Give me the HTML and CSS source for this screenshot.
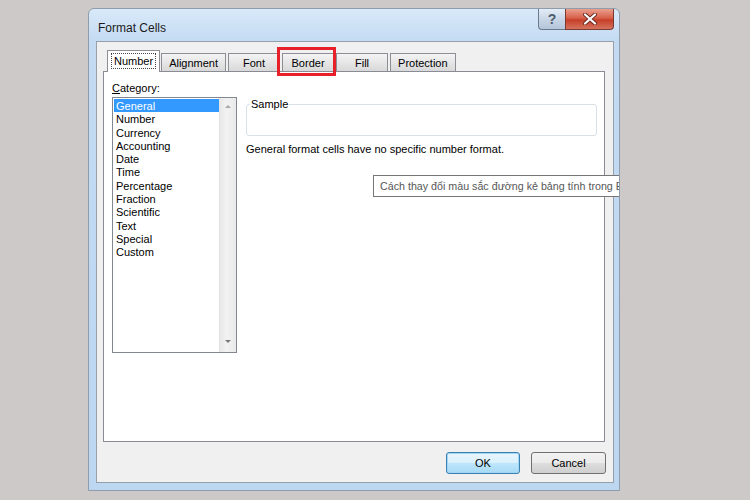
FILE: index.html
```html
<!DOCTYPE html>
<html>
<head>
<meta charset="utf-8">
<link rel="stylesheet" href="styles.css">
</head>
<body>
<div class="window">
  <div class="titlebar">
    <span class="title">Format Cells</span>
    <div class="caption">
      <span class="cap-help">?</span>
      <span class="cap-close">
        <svg width="20" height="12" viewBox="0 0 20 12">
          <path d="M5 1.5 L15 10.5 M15 1.5 L5 10.5" stroke="#6b2a22" stroke-width="4" stroke-linecap="round"/>
          <path d="M5 1.5 L15 10.5 M15 1.5 L5 10.5" stroke="#ffffff" stroke-width="2.2" stroke-linecap="round"/>
        </svg>
      </span>
    </div>
  </div>
  <div class="client">
    <div class="tabs">
      <div class="tab selected"><span class="focus">Number</span></div>
      <div class="tab">Alignment</div>
      <div class="tab">Font</div>
      <div class="tab marked">Border</div>
      <div class="tab">Fill</div>
      <div class="tab">Protection</div>
    </div>
    <div class="panel">
      <div class="col-left">
        <div class="label"><u>C</u>ategory:</div>
        <div class="listbox">
          <ul class="items">
            <li class="sel">General</li>
            <li>Number</li>
            <li>Currency</li>
            <li>Accounting</li>
            <li>Date</li>
            <li>Time</li>
            <li>Percentage</li>
            <li>Fraction</li>
            <li>Scientific</li>
            <li>Text</li>
            <li>Special</li>
            <li>Custom</li>
          </ul>
          <div class="scrollbar">
            <span class="arrow up"></span>
            <span class="arrow down"></span>
          </div>
        </div>
      </div>
      <div class="col-right">
        <fieldset class="sample">
          <legend>Sample</legend>
        </fieldset>
        <div class="desc">General format cells have no specific number format.</div>
      </div>
    </div>
    <div class="buttons">
      <div class="btn default">OK</div>
      <div class="btn">Cancel</div>
    </div>
  </div>
  <div class="tooltip">Cách thay đổi màu sắc đường kẻ bảng tính trong E</div>
</div>
</body>
</html>
```

FILE: styles.css
```css
html, body {
  margin: 0;
  padding: 0;
}
body {
  background: #cdc9c9;
  font-family: "Liberation Sans", Arial, sans-serif;
  font-size: 11px;
  color: #000;
  height: 500px;
  overflow: hidden;
}
.window {
  position: relative;
  margin: 8px 0 0 88px;
  width: 532px;
  height: 483px;
  box-sizing: border-box;
  border: 1px solid #8f9cab;
  border-radius: 6px 6px 0 0;
  background: linear-gradient(to bottom, #d9e9f9 0px, #c3daf2 34px, #bdd7f1 100%);
  padding: 0 5px 7px 7px;
  display: flex;
  flex-direction: column;
  overflow: hidden;
}
.titlebar {
  height: 32px;
  display: flex;
  justify-content: space-between;
  align-items: flex-start;
  flex-shrink: 0;
}
.title {
  font-size: 12px;
  line-height: 14px;
  padding: 12px 0 0 2px;
  color: #1a1a1a;
}
.caption {
  display: flex;
  margin-right: 0;
}
.cap-help {
  width: 27px;
  height: 21px;
  box-sizing: border-box;
  border: 1px solid #6a7a8e;
  border-top: none;
  border-right: none;
  border-radius: 0 0 0 4px;
  background: linear-gradient(to bottom, #e4edf7, #c8d6e6 50%, #b5c6da);
  color: #4d5b6c;
  font-size: 14px;
  font-weight: bold;
  text-align: center;
  line-height: 20px;
}
.cap-close {
  width: 49px;
  height: 21px;
  box-sizing: border-box;
  border: 1px solid #7a3b33;
  border-top: none;
  border-radius: 0 0 4px 0;
  background: linear-gradient(to bottom, #eba08f, #d8604a 45%, #c63f28 55%, #d5735d);
  display: flex;
  align-items: center;
  justify-content: center;
}
.client {
  flex: 1;
  border: 1px solid #96a0ab;
  background: #f0f0f0;
  display: flex;
  flex-direction: column;
}
.tabs {
  display: flex;
  align-items: flex-end;
  height: 21px;
  margin-top: 8px;
  padding-left: 10px;
  position: relative;
  z-index: 2;
}
.tab {
  position: relative;
  height: 18px;
  box-sizing: border-box;
  min-width: 52px;
  padding: 0 7px;
  margin-right: 2px;
  border: 1px solid #8c8e94;
  border-bottom: none;
  background: linear-gradient(to bottom, #f4f4f4, #e6e6e6 50%, #d9d9d9);
  text-align: center;
  line-height: 18px;
  color: #000;
}
.tab.selected {
  height: 22px;
  margin-bottom: -1px;
  margin-right: 1px;
  min-width: 51px;
  padding: 0 3px;
  background: #ffffff;
  line-height: 20px;
}
.focus {
  border: 1px dotted #444;
  padding: 0 2px;
  line-height: 14px;
  display: inline-block;
}
.tab.marked::after {
  content: "";
  position: absolute;
  left: -6px;
  right: -3px;
  top: -7px;
  bottom: -5px;
  border: 3px solid #e8202a;
}
.panel {
  height: 371px;
  box-sizing: border-box;
  margin: 0 8px 0 6px;
  border: 1px solid #898c95;
  background: #ffffff;
  display: flex;
  gap: 9px;
  padding: 0 7px 0 8px;
  position: relative;
  z-index: 1;
}
.col-left {
  width: 125px;
  flex-shrink: 0;
}
.label {
  margin-top: 10px;
  line-height: 13px;
  height: 15px;
}
.listbox {
  height: 256px;
  box-sizing: border-box;
  border: 1px solid #828790;
  display: flex;
  padding: 1px 0 1px 1px;
}
.items {
  list-style: none;
  margin: 0;
  padding: 0;
  flex: 1;
}
.items li {
  line-height: 14.3px;
  height: 13.3px;
  padding-left: 2px;
}
.items li.sel {
  background: #3399ff;
  color: #ffffff;
}
.scrollbar {
  width: 17px;
  margin: -1px 0;
  background: linear-gradient(to right, #e8e8e8, #f2f2f2 40%, #eaeaea);
  border-left: 1px solid #e3e3e3;
  display: flex;
  flex-direction: column;
  justify-content: space-between;
  align-items: center;
  padding: 7px 0 9px;
  box-sizing: border-box;
}
.arrow {
  width: 0;
  height: 0;
  border-left: 3px solid transparent;
  border-right: 3px solid transparent;
}
.arrow.up {
  border-bottom: 3px solid #a8a8a8;
}
.arrow.down {
  border-top: 3px solid #7a7a7a;
}
.col-right {
  flex: 1;
}
.sample {
  margin: 26px 0 0 0;
  padding: 0 4px;
  height: 38px;
  box-sizing: border-box;
  border: 1px solid #d9e0e6;
  border-radius: 3px;
}
.sample legend {
  padding: 0 1px;
  line-height: 13px;
  margin-left: -1px;
}
.desc {
  margin-top: 7px;
  line-height: 13px;
}
.buttons {
  display: flex;
  justify-content: flex-end;
  gap: 11px;
  margin-top: 10px;
  padding-right: 7px;
}
.btn {
  width: 75px;
  height: 22px;
  box-sizing: border-box;
  border: 1px solid #707070;
  border-radius: 3px;
  background: linear-gradient(to bottom, #f2f2f2, #ebebeb 50%, #dddddd 51%, #cfcfcf);
  text-align: center;
  line-height: 20px;
}
.btn.default {
  width: 74px;
  border: 1px solid #3c7fb1;
  box-shadow: inset 0 0 0 1px #9fd7f5;
  background: linear-gradient(to bottom, #eaf6fd, #d9f0fc 50%, #bee6fd 51%, #a7d9f5);
}
.tooltip {
  position: absolute;
  left: 284px;
  top: 166px;
  height: 22px;
  box-sizing: border-box;
  border: 1px solid #767676;
  background: #ffffff;
  color: #575757;
  padding: 0 6px;
  font-size: 10.7px;
  line-height: 20px;
  white-space: nowrap;
  z-index: 5;
}
```
